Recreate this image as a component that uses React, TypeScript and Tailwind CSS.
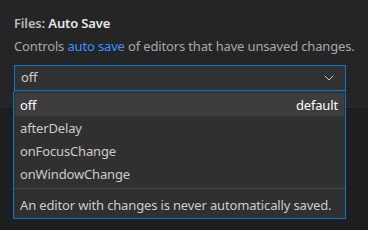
import { ChevronDown } from "lucide-react";

const options = ["off", "afterDelay", "onFocusChange", "onWindowChange"];

export default function App() {
  return (
    <div
      className="relative w-[368px] h-[230px] overflow-hidden bg-[#1e1e1e] text-[13px] tracking-[-0.15px] text-[#cccccc]"
      style={{ fontFamily: '"Noto Sans", "Open Sans", sans-serif' }}
    >
      {/* Setting item */}
      <div className="h-[108px] bg-[#252526] px-[14px] pt-[14px]">
        <div className="leading-[18px] font-semibold text-[#bbbbbb]">
          Files: <span className="text-[#e7e7e7]">Auto Save</span>
        </div>
        <div className="mt-[5px] leading-[18px] text-[#a8a8a8] whitespace-nowrap">
          Controls <span className="text-[#3794ff]">auto save</span> of editors that have unsaved changes.
        </div>
        <div className="mt-[10px] flex h-[26px] w-[332px] items-center justify-between border border-[#0078d4] bg-[#313131] pl-[6px] pr-[8px] text-[#cccccc]">
          <span>off</span>
          <ChevronDown size={16} strokeWidth={1.5} className="text-[#c5c5c5]" />
        </div>
      </div>

      {/* Dropdown menu */}
      <div className="absolute left-[13px] top-[91px] w-[333px] border border-[#0078d4] border-t-[#3c3c3c] bg-[#303031] pt-[1px]">
        {options.map((o, i) => (
          <div
            key={o}
            className={`mx-[1px] flex h-[23px] items-center justify-between px-[5px] pt-[2px] ${
              i === 0 ? "bg-[#3d3d3d] text-[#ffffff]" : "text-[#cccccc]"
            }`}
          >
            <span>{o}</span>
            {i === 0 && <span className="pr-[1px]">default</span>}
          </div>
        ))}
        <div className="mt-[3px] whitespace-nowrap border-t border-[#454545] px-[6px] pt-[7px] pb-[4px] leading-[18px] text-[#cccccc]">
          An editor with changes is never automatically saved.
        </div>
      </div>
    </div>
  );
}
